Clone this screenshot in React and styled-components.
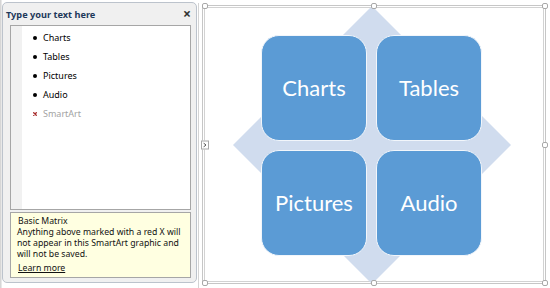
import React from 'react';
import styled, { createGlobalStyle } from 'styled-components';

const Global = createGlobalStyle`
  html, body { margin: 0; padding: 0; background: #fff; }
  body { width: 550px; height: 288px; overflow: hidden; font-family: "Noto Sans", "Open Sans", sans-serif; }
  * { box-sizing: border-box; }
`;

const Page = styled.div`
  display: flex;
  align-items: flex-start;
  width: 550px;
  height: 288px;
  background: #fff;
`;

const Gutter = styled.div`
  width: 2px;
  align-self: stretch;
  background: #d6d6d6;
  border-right: 1px solid #e8e8e8;
`;

const Panel = styled.div`
  width: 195px;
  height: 281px;
  margin-top: 2px;
  border: 1px solid #bcc3cc;
  border-radius: 5px;
  background: #f0f0f0;
  display: flex;
  flex-direction: column;
  padding: 0 5px 4px 7px;
`;

const Header = styled.div`
  height: 22px;
  margin-left: -4px;
  display: flex;
  align-items: center;
  justify-content: space-between;
`;

const Title = styled.span`
  font-size: 9.2px;
  font-weight: 700;
  color: #1e395b;
`;

const Close = styled.span`
  font-size: 14px;
  font-weight: 700;
  color: #333;
  line-height: 1;
`;

const TextArea = styled.div`
  flex: 1;
  background: #fff;
  border: 1px solid #a6a6a6;
  display: flex;
`;

const Strip = styled.div`
  width: 11px;
  background: #f1f1f1;
`;

const List = styled.ul`
  list-style: none;
  margin: 0;
  padding: 2px 0 0 11px;
`;

const Item = styled.li`
  height: 19px;
  display: flex;
  align-items: center;
  font-size: 9px;
  color: ${p => (p.$muted ? '#a3a3a3' : '#000')};
`;

const Bullet = styled.span`
  width: 4px;
  height: 4px;
  border-radius: 50%;
  background: #000;
  margin-right: 6px;
  flex: none;
`;

const RedX = styled.svg`
  display: block;
  margin-right: 6px;
  flex: none;
`;

const InfoBox = styled.div`
  margin-top: 2px;
  height: 66px;
  background: #ffffe1;
  border: 1px solid #a6a6a6;
  padding: 2px 4px 0 4px;
  font-size: 8.7px;
  color: #111;
`;

const InfoTitle = styled.div`
  padding-left: 3px;
  line-height: 12px;
`;

const InfoText = styled.div`
  padding-left: 2px;
  line-height: 11px;
`;

const Learn = styled.a`
  display: block;
  margin-top: 2px;
  padding-left: 3px;
  color: #111;
  text-decoration: underline;
  line-height: 12px;
`;

const Divider = styled.div`
  width: 1px;
  align-self: stretch;
  margin: 3px 3px 0 1px;
  background: #d4d4d4;
`;

const Frame = styled.div`
  position: relative;
  margin-top: 5px;
  width: 344px;
  height: 279px;
  border: 1px solid #c6c6c6;
  box-shadow: inset 0 0 0 1px #fff, inset 0 0 0 2px #d2d2d2;
  display: grid;
  place-items: center;
  padding: 0 5px 3px 0;
`;

const Diamond = styled.svg`
  grid-area: 1 / 1;
  display: block;
`;

const Matrix = styled.div`
  grid-area: 1 / 1;
  display: grid;
  grid-template-columns: 106px 106px;
  grid-auto-rows: 106px;
  gap: 9px;
`;

const Box = styled.div`
  background: #5b9bd5;
  border: 1px solid #f2f6fb;
  border-radius: 18px;
  display: flex;
  align-items: center;
  justify-content: center;
  color: #fff;
  font-family: Lato, "Open Sans", sans-serif;
  font-size: 22px;
`;

const Handle = styled.span`
  position: absolute;
  width: 6px;
  height: 6px;
  border: 1px solid #a8a8a8;
  border-radius: 2px;
  background: #fff;
  left: ${p => p.$x};
  top: ${p => p.$y};
  transform: translate(-50%, -50%);
`;

const Expander = styled.span`
  position: absolute;
  left: -2px;
  top: 50%;
  width: 8px;
  height: 9px;
  transform: translateY(-50%);
  border: 1px solid #a8a8a8;
  background: #fff;
  display: flex;
  align-items: center;
  justify-content: center;
`;

const handles = [
  ['2px', '0px'], ['50%', '0px'], ['100%', '0px'],
  ['100%', '50%'],
  ['2px', '100%'], ['50%', '100%'], ['100%', '100%'],
];

const items = ['Charts', 'Tables', 'Pictures', 'Audio'];

export default function App() {
  return (
    <>
      <Global />
      <Page>
        <Gutter />
        <Panel>
          <Header>
            <Title>Type your text here</Title>
            <Close>×</Close>
          </Header>
          <TextArea>
            <Strip />
            <List>
              {items.map(t => (
                <Item key={t}><Bullet />{t}</Item>
              ))}
              <Item $muted>
                <RedX width="4" height="4" viewBox="0 0 4 4">
                  <path d="M0.3 0.3 L3.7 3.7 M3.7 0.3 L0.3 3.7" stroke="#a82c2c" strokeWidth="1.3" />
                </RedX>
                SmartArt
              </Item>
            </List>
          </TextArea>
          <InfoBox>
            <InfoTitle>Basic Matrix</InfoTitle>
            <InfoText>
              Anything above marked with a red X will<br />
              not appear in this SmartArt graphic and<br />
              will not be saved.
            </InfoText>
            <Learn href="#">Learn more</Learn>
          </InfoBox>
        </Panel>
        <Divider />
        <Frame>
          <Diamond width="278" height="278" viewBox="0 0 278 278">
            <polygon points="139,0 278,139 139,278 0,139" fill="#d0dcee" />
          </Diamond>
          <Matrix>
            {items.map(t => <Box key={t}>{t}</Box>)}
          </Matrix>
          {handles.map(([x, y], i) => <Handle key={i} $x={x} $y={y} />)}
          <Expander>
            <svg width="4" height="5" viewBox="0 0 4 5">
              <path d="M0.5 0.5 L3 2.5 L0.5 4.5" fill="none" stroke="#555" strokeWidth="1" />
            </svg>
          </Expander>
        </Frame>
      </Page>
    </>
  );
}
